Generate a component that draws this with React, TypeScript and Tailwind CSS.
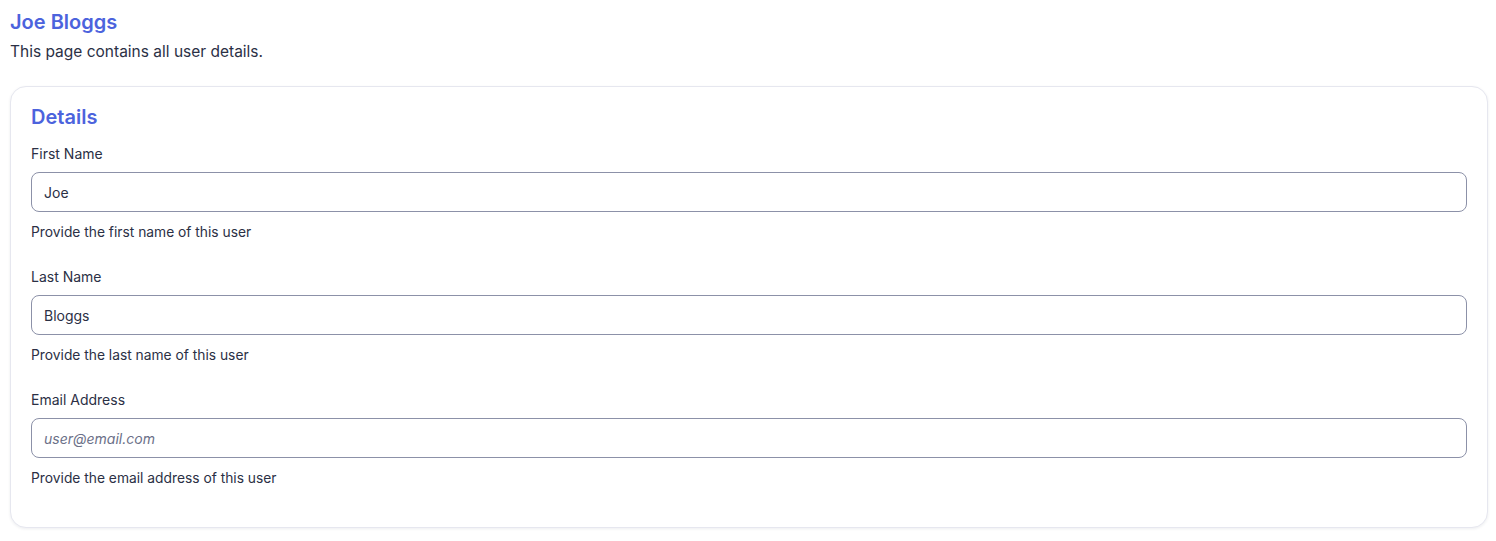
import type { ReactNode } from 'react';

interface FieldProps {
  label: string;
  value?: string;
  placeholder?: string;
  help: string;
  last?: boolean;
}

function Field({ label, value, placeholder, help, last }: FieldProps) {
  return (
    <div className={last ? '' : 'mb-[25px]'}>
      <label className="block text-[14px] leading-5 text-[#2b3045]">{label}</label>
      <input
        readOnly
        defaultValue={value}
        placeholder={placeholder}
        className="mt-2 block h-10 w-full rounded-lg border border-[#8c91a8] bg-white px-3 text-[14px] text-[#2b3045] outline-none placeholder:italic placeholder:text-[#6b7088]"
      />
      <p className="mt-[10px] text-[13.8px] leading-5 text-[#2b3045]">{help}</p>
    </div>
  );
}

function Card({ title, children }: { title: string; children: ReactNode }) {
  return (
    <div className="rounded-2xl border border-[#e6e7ef] bg-white px-5 pt-4 pb-[39px] shadow-[0_1px_3px_rgba(30,35,60,0.08)]">
      <h2 className="mb-[13px] text-[20px] leading-7 font-semibold text-[#4c63dd]">{title}</h2>
      {children}
    </div>
  );
}

export default function App() {
  return (
    <div
      className="min-h-screen bg-white pl-[10px] pr-2 pt-[8px] text-[#2b3045]"
      style={{ fontFamily: 'Inter, "Noto Sans", sans-serif' }}
    >
      <h1 className="text-[20px] leading-7 font-semibold text-[#4c63dd]">Joe Bloggs</h1>
      <p className="mt-1 text-[15.5px] leading-6 text-[#2b3045]">This page contains all user details.</p>

      <div className="mt-[22px]">
        <Card title="Details">
          <Field label="First Name" value="Joe" help="Provide the first name of this user" />
          <Field label="Last Name" value="Bloggs" help="Provide the last name of this user" />
          <Field
            label="Email Address"
            placeholder="user@email.com"
            help="Provide the email address of this user"
            last
          />
        </Card>
      </div>
    </div>
  );
}
